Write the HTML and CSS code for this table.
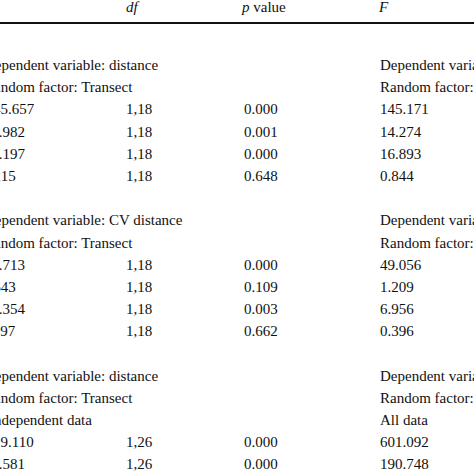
FILE: index.html
```html
<!DOCTYPE html>
<html>
<head>
<meta charset="utf-8">
<link rel="stylesheet" href="styles.css">
</head>
<body>
<div class="table">
  <div class="row head">
    <div class="cell"></div>
    <div class="cell"><i>df</i></div>
    <div class="cell pv"><i>p</i> value</div>
    <div class="cell fh"><i>F</i></div>
  </div>

  <div class="body">
    <div class="row"><div class="cell lead cut-l">Dependent variable: distance</div><div class="cell"></div><div class="cell"></div><div class="cell">Dependent variable: distance</div></div>
    <div class="row"><div class="cell lead cut-l">Random factor: Transect</div><div class="cell"></div><div class="cell"></div><div class="cell">Random factor: Transect</div></div>
    <div class="row"><div class="cell lead cut-a">45.657</div><div class="cell">1,18</div><div class="cell">0.000</div><div class="cell">145.171</div></div>
    <div class="row"><div class="cell lead cut-b">4.982</div><div class="cell">1,18</div><div class="cell">0.001</div><div class="cell">14.274</div></div>
    <div class="row"><div class="cell lead cut-b">8.197</div><div class="cell">1,18</div><div class="cell">0.000</div><div class="cell">16.893</div></div>
    <div class="row"><div class="cell lead cut-c">0.215</div><div class="cell">1,18</div><div class="cell">0.648</div><div class="cell">0.844</div></div>
    <div class="row blank"></div>
    <div class="row"><div class="cell lead cut-l">Dependent variable: CV distance</div><div class="cell"></div><div class="cell"></div><div class="cell">Dependent variable: CV distance</div></div>
    <div class="row"><div class="cell lead cut-l">Random factor: Transect</div><div class="cell"></div><div class="cell"></div><div class="cell">Random factor: Transect</div></div>
    <div class="row"><div class="cell lead cut-b">2.713</div><div class="cell">1,18</div><div class="cell">0.000</div><div class="cell">49.056</div></div>
    <div class="row"><div class="cell lead cut-c">0.643</div><div class="cell">1,18</div><div class="cell">0.109</div><div class="cell">1.209</div></div>
    <div class="row"><div class="cell lead cut-b">5.354</div><div class="cell">1,18</div><div class="cell">0.003</div><div class="cell">6.956</div></div>
    <div class="row"><div class="cell lead cut-d">0.197</div><div class="cell">1,18</div><div class="cell">0.662</div><div class="cell">0.396</div></div>
    <div class="row blank"></div>
    <div class="row"><div class="cell lead cut-l">Dependent variable: distance</div><div class="cell"></div><div class="cell"></div><div class="cell">Dependent variable: distance</div></div>
    <div class="row"><div class="cell lead cut-l">Random factor: Transect</div><div class="cell"></div><div class="cell"></div><div class="cell">Random factor: Transect</div></div>
    <div class="row"><div class="cell lead cut-i">Independent data</div><div class="cell"></div><div class="cell"></div><div class="cell">All data</div></div>
    <div class="row"><div class="cell lead cut-a">19.110</div><div class="cell">1,26</div><div class="cell">0.000</div><div class="cell">601.092</div></div>
    <div class="row"><div class="cell lead cut-b">2.581</div><div class="cell">1,26</div><div class="cell">0.000</div><div class="cell">190.748</div></div>
  </div>
</div>
</body>
</html>
```

FILE: styles.css
```css
html, body {
  margin: 0;
  padding: 0;
  background: #ffffff;
  overflow: hidden;
}

body {
  font-family: "Liberation Serif", "Times New Roman", serif;
  font-size: 15px;
  color: #111111;
}

.table {
  width: 474px;
}

.row {
  display: grid;
  grid-template-columns: 126px 118px 136px 1fr;
  line-height: 22.2px;
  height: 22.2px;
  white-space: nowrap;
}

.cell {
  white-space: nowrap;
}

.head {
  margin-top: -4px;
  height: 22px;
  line-height: 22px;
  padding-bottom: 4px;
  border-bottom: 2px solid #111111;
}

.head i {
  font-style: italic;
}

.pv {
  margin-left: -2px;
}

.fh {
  margin-left: -1px;
}

.body {
  padding-top: 30px;
}

.blank {
  height: 22.2px;
}

.lead {
  overflow: visible;
}

.cut-l { margin-left: -16px; }
.cut-i { margin-left: -11px; }
.cut-a { margin-left: -7px; }
.cut-b { margin-left: -8.75px; }
.cut-c { margin-left: -18px; }
.cut-d { margin-left: -18.5px; }
```
